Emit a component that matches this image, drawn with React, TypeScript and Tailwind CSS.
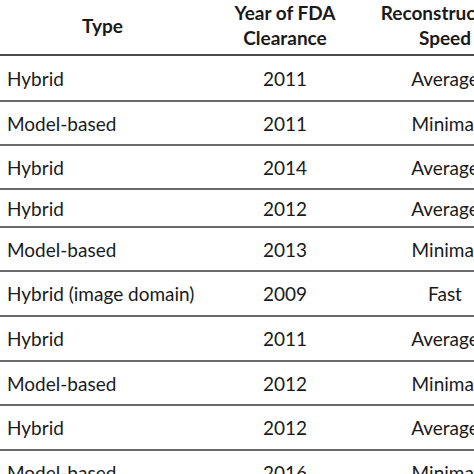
import React from "react";

const rows: { type: string; year: string; speed: string; h: string }[] = [
  { type: "Hybrid", year: "2011", speed: "Average", h: "h-[46px]" },
  { type: "Model-based", year: "2011", speed: "Minimal", h: "h-[44px]" },
  { type: "Hybrid", year: "2014", speed: "Average", h: "h-[44px]" },
  { type: "Hybrid", year: "2012", speed: "Average", h: "h-[38px]" },
  { type: "Model-based", year: "2013", speed: "Minimal", h: "h-[44px]" },
  { type: "Hybrid (image domain)", year: "2009", speed: "Fast", h: "h-[45px]" },
  { type: "Hybrid", year: "2011", speed: "Average", h: "h-[45px]" },
  { type: "Model-based", year: "2012", speed: "Minimal", h: "h-[44px]" },
  { type: "Hybrid", year: "2012", speed: "Average", h: "h-[45px]" },
  { type: "Model-based", year: "2016", speed: "Minimal", h: "h-[45px]" },
];

export default function App() {
  return (
    <div
      className="w-[474px] h-[474px] overflow-hidden bg-white text-[#1a1a1a]"
      style={{ fontFamily: "Lato, 'Open Sans', sans-serif" }}
    >
      <div className="w-[540px]">
        <div className="grid grid-cols-[205px_160px_175px] h-[56px] border-b-2 border-[#4a4a4a] font-bold text-[19px] leading-[25px]">
          <div className="flex items-center justify-center pb-[4px]">Type</div>
          <div className="flex flex-col items-center justify-center text-center pb-[4px]">
            <span>Year of FDA</span>
            <span>Clearance</span>
          </div>
          <div className="flex flex-col items-center justify-center text-center pb-[4px] pr-[15px]">
            <span>Reconstruction</span>
            <span>Speed</span>
          </div>
        </div>
        {rows.map((r, i) => (
          <div
            key={i}
            className={`grid grid-cols-[205px_160px_175px] ${r.h} border-b-2 border-[#6a6a6a] text-[19px] leading-none`}
          >
            <div className="flex items-center pl-[7px]">{r.type}</div>
            <div className="flex items-center justify-center">{r.year}</div>
            <div className="flex items-center justify-center pr-[15px]">{r.speed}</div>
          </div>
        ))}
      </div>
    </div>
  );
}
